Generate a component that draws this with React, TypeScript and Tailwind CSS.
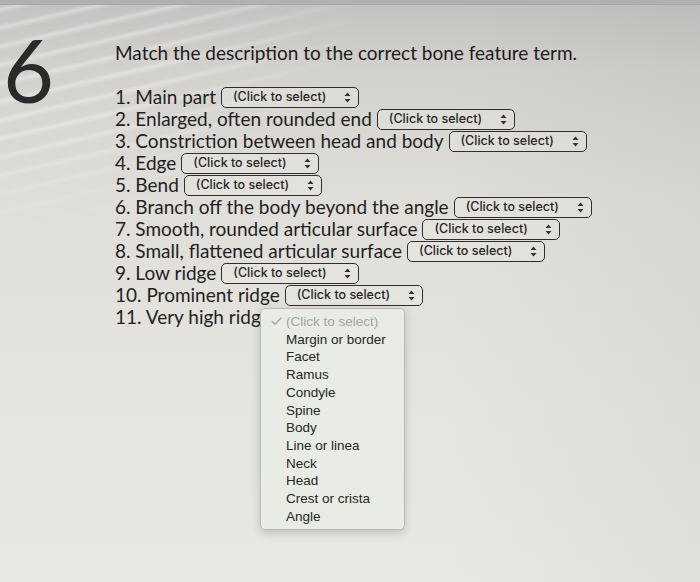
import { Check } from "lucide-react";

const prompts = [
  "1. Main part",
  "2. Enlarged, often rounded end",
  "3. Constriction between head and body",
  "4. Edge",
  "5. Bend",
  "6. Branch off the body beyond the angle",
  "7. Smooth, rounded articular surface",
  "8. Small, flattened articular surface",
  "9. Low ridge",
  "10. Prominent ridge",
  "11. Very high ridge",
];

const options = [
  "Margin or border",
  "Facet",
  "Ramus",
  "Condyle",
  "Spine",
  "Body",
  "Line or linea",
  "Neck",
  "Head",
  "Crest or crista",
  "Angle",
];

function SelectBox() {
  return (
    <div className="ml-[5px] flex h-[21px] w-[138px] shrink-0 items-center justify-between rounded-[5px] border-[1.5px] border-[#2e2e2e] bg-[#e9e8e3]/40 pl-[11px] pr-[7px] font-['Inter',sans-serif] text-[12.5px] font-medium text-[#262626]">
      <span>(Click to select)</span>
      <svg width="7" height="11" viewBox="0 0 7 11" className="text-[#333]">
        <path d="M3.5 0.5 L6.5 4 H0.5 Z" fill="currentColor" />
        <path d="M3.5 10.5 L6.5 7 H0.5 Z" fill="currentColor" />
      </svg>
    </div>
  );
}

export default function App() {
  return (
    <div className="relative h-[582px] w-[700px] overflow-hidden bg-[linear-gradient(180deg,#c4c2c0_0%,#d3d1cd_12%,#e0ded9_35%,#e5e4df_70%,#e8e8e4_100%)] font-['Lato',sans-serif] text-[#1f1f1f]">
      {/* glare streaks across the upper-left */}
      <div className="pointer-events-none absolute -left-[40px] -top-[40px] h-[260px] w-[420px] -rotate-[8deg] bg-[repeating-linear-gradient(175deg,rgba(255,255,255,0)_0px,rgba(255,255,255,0)_9px,rgba(255,255,255,0.34)_13px,rgba(255,255,255,0)_18px)] [mask-image:radial-gradient(ellipse_at_20%_25%,black_30%,transparent_70%)]" />
      <div className="pointer-events-none absolute right-0 top-0 h-full w-[260px] bg-[linear-gradient(90deg,rgba(0,0,0,0),rgba(0,0,0,0.04))]" />

      <div className="relative h-[5px] border-b border-[#a9a7a5] bg-[#b3b1ae]" />

      <div className="relative flex">
        <div className="w-[115px] shrink-0 pl-[3px] pt-[20px] text-[88px] font-normal leading-none text-[#2a2a2a]">
          6
        </div>

        <div className="pt-[37px]">
          <h1 className="text-[19px] leading-[22px] text-[#1c1c1c]">
            Match the description to the correct bone feature term.
          </h1>

          <ul className="mt-[22px] flex flex-col">
            {prompts.map((p, i) => (
              <li key={p} className="flex h-[22px] items-center whitespace-nowrap text-[19px] leading-[22px]">
                <span>{p}</span>
                {/* the last row's select sits under its open popup */}
                {i < prompts.length - 1 && <SelectBox />}
              </li>
            ))}
          </ul>
        </div>
      </div>

      {/* open popup for the last row */}
      <div className="absolute left-[260px] top-[308px] w-[145px] rounded-[5px] border border-[#b9bbb6] bg-[#e8ece5] py-[4px] font-['Liberation_Sans',sans-serif] text-[13.5px] leading-[17.7px] text-[#262626] shadow-[0_3px_10px_rgba(0,0,0,0.18)]">
        <div className="flex items-center text-[#a3a5a2]">
          <span className="flex w-[25px] justify-end pr-[3px]">
            <Check size={13} strokeWidth={2.5} />
          </span>
          <span>(Click to select)</span>
        </div>
        {options.map((o) => (
          <div key={o} className="pl-[25px]">
            {o}
          </div>
        ))}
      </div>
    </div>
  );
}
